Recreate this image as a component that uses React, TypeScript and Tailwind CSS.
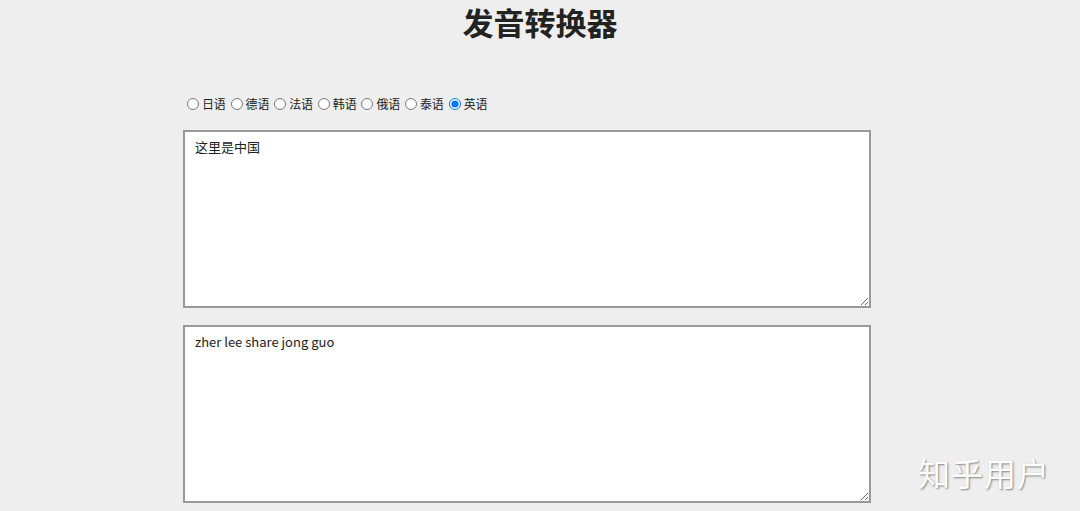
import React from "react";

const langs = ["日语", "德语", "法语", "韩语", "俄语", "泰语", "英语"];

export default function App() {
  return (
    <div
      className="relative w-[1080px] h-[511px] overflow-hidden bg-[#eeeeee] text-[#222]"
      style={{ fontFamily: '"Noto Sans CJK SC", "Noto Sans", sans-serif' }}
    >
      <h1 className="pt-[2px] text-center text-[31px] leading-[40px] font-bold text-[#222]">发音转换器</h1>
      <div className="pl-[183px] pt-[54px]">
        <div className="flex items-center h-[16px] -ml-[1px] text-[12px] leading-[16px] text-[#222]">
          {langs.map((l) => (
            <label key={l} className="flex items-center">
              <input
                type="radio"
                name="lang"
                defaultChecked={l === "英语"}
                className="ml-[5px] mr-[3px] w-[12px] h-[12px]"
              />
              <span className="tracking-[-0.2px]">{l}</span>
            </label>
          ))}
        </div>
        <textarea
          defaultValue="这里是中国"
          className="block mt-[18px] w-[688px] h-[178px] border-2 border-[#999] bg-white px-[10px] pt-[6px] pb-[6px] text-[13px] leading-[18px] text-[#222] outline-none"
        />
        <textarea
          defaultValue="zher lee share jong guo"
          className="block mt-[17px] w-[688px] h-[178px] border-2 border-[#999] bg-white px-[10px] pt-[6px] pb-[6px] text-[13px] leading-[18px] text-[#222] outline-none"
        />
      </div>
      <div
        className="absolute left-[918px] top-[452px] text-[32px] leading-[40px] text-white tracking-[1px]"
        style={{ textShadow: "1px 1px 2px rgba(0,0,0,0.45)" }}
      >
        知乎用户
      </div>
    </div>
  );
}
